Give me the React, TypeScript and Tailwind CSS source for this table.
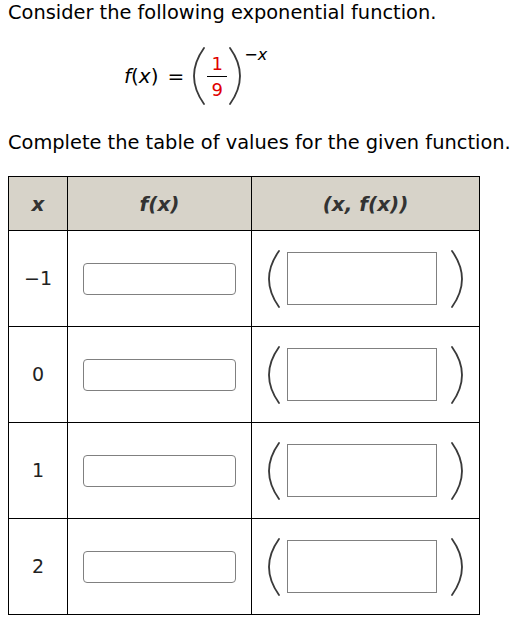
import React from 'react';

const font = { fontFamily: '"DejaVu Sans", Verdana, sans-serif' };

function Paren({ side, h = 58 }: { side: 'left' | 'right'; h?: number }) {
    const d = side === 'left' ? `M13 1 Q-7 ${h / 2} 13 ${h - 1}` : `M1 1 Q21 ${h / 2} 1 ${h - 1}`;
    return (
        <svg width="14" height={h} viewBox={`0 0 14 ${h}`} className="block">
            <path d={d} fill="none" stroke="#3a3a3a" strokeWidth="1.8" strokeLinecap="round" />
        </svg>
    );
}

const rows = ['\u22121', '0', '1', '2'];

export default function App() {
    return (
        <div className="bg-white w-[511px] h-[627px] text-black" style={font}>
            <div className="pl-2 text-[19.4px] leading-[26px] whitespace-nowrap">
                Consider the following exponential function.
            </div>

            {/* formula */}
            <div className="flex items-center ml-[124px] mt-[20px] h-[60px] text-[20px]">
                <span>
                    <i>f</i>(<i>x</i>)
                </span>
                <span className="ml-[9px]">=</span>
                <div className="ml-[7px] flex items-center">
                    <Paren side="left" />
                    <div className="flex flex-col items-center mx-[2px] text-[#e00000] text-[18px] leading-[19px]">
                        <span>1</span>
                        <span className="w-[20px] h-px bg-black my-[3px]" />
                        <span>9</span>
                    </div>
                    <Paren side="right" />
                </div>
                <span className="self-start -mt-[3px] ml-[1px] text-[16px]">
                    {'\u2212'}
                    <i>x</i>
                </span>
            </div>

            <div className="pl-2 mt-[24px] text-[19.4px] leading-[26px] whitespace-nowrap">
                Complete the table of values for the given function.
            </div>

            <table className="ml-2 mt-[20px] border-collapse">
                <thead>
                    <tr className="bg-[#d7d3c9] h-[54px] text-[#333] font-bold italic text-[20px]">
                        <th className="w-[59px] border border-black">x</th>
                        <th className="w-[184px] border border-black">f(x)</th>
                        <th className="w-[228px] border border-black">(x, f(x))</th>
                    </tr>
                </thead>
                <tbody>
                    {rows.map((r) => (
                        <tr key={r} className="h-[96px]">
                            <td className="border border-black text-center text-[19px] text-[#222]">{r}</td>
                            <td className="border border-black">
                                <div className="ml-[15px] w-[153px] h-[32px] border border-[#808080] rounded-[4px]" />
                            </td>
                            <td className="border border-black">
                                <div className="flex items-center ml-[14px]">
                                    <Paren side="left" />
                                    <div className="ml-[7px] w-[150px] h-[53px] border border-[#808080]" />
                                    <div className="ml-[14px]">
                                        <Paren side="right" />
                                    </div>
                                </div>
                            </td>
                        </tr>
                    ))}
                </tbody>
            </table>
        </div>
    );
}
